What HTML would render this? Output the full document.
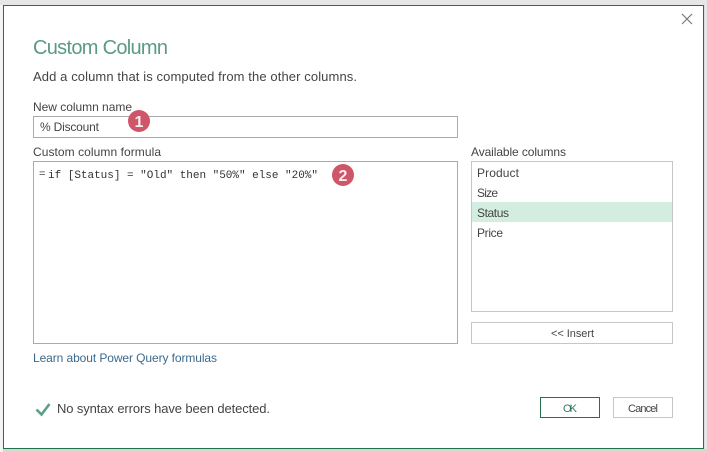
<!DOCTYPE html>
<html><head><meta charset="utf-8"><style>
html,body{margin:0;padding:0;width:707px;height:452px;overflow:hidden;background:#fff}
svg{display:block}
text{font-family:"Liberation Sans",sans-serif;font-size:12px;fill:#444}
</style></head><body>
<svg width="707" height="452" viewBox="0 0 707 452" xmlns="http://www.w3.org/2000/svg">
<rect width="707" height="452" fill="#ffffff"/>
<rect width="707" height="5" fill="#e6e6e6"/>
<rect x="704" y="5" width="3" height="447" fill="#dcdcdc"/>
<rect x="705" y="5" width="2" height="447" fill="#e8e8e8"/>
<rect x="0" y="449" width="707" height="3" fill="#d6d6d6"/>
<rect x="0" y="5" width="3" height="447" fill="#f4f4f4"/>
<rect x="3.5" y="5.5" width="700" height="443" fill="#fff" stroke="#217346"/>
<path d="M682 14L692 24M692 14L682 24" stroke="#777" stroke-width="1.2" fill="none"/>
<text x="33" y="54" style="font-size:20px;fill:#5a9a86" textLength="135">Custom Column</text>
<text x="33" y="81" style="font-size:13px" textLength="324">Add a column that is computed from the other columns.</text>
<text x="33" y="111" textLength="99">New column name</text>
<rect x="33.5" y="116.5" width="424" height="21" fill="#fff" stroke="#ababab"/>
<text x="40" y="131" textLength="59">% Discount</text>
<circle cx="139" cy="121" r="11" fill="#cf5668"/>
<text x="139" y="127" text-anchor="middle" style="font-size:16px;font-weight:bold;fill:#fbeef0">1</text>
<text x="33" y="156" textLength="128">Custom column formula</text>
<rect x="33.5" y="161.5" width="424" height="182" fill="#fff" stroke="#ababab"/>
<text x="39" y="177" style="font-size:11px">=</text>
<text x="48" y="178" style="font-family:'Liberation Mono',monospace;font-size:11px;fill:#333" textLength="270">if [Status] = "Old" then "50%" else "20%"</text>
<circle cx="343" cy="175" r="11" fill="#cf5668"/>
<text x="343" y="181" text-anchor="middle" style="font-size:16px;font-weight:bold;fill:#fbeef0">2</text>
<text x="471" y="156" textLength="95">Available columns</text>
<rect x="471.5" y="161.5" width="201" height="150" fill="#fff" stroke="#c6c6c6"/>
<rect x="472" y="202" width="200" height="20" fill="#d3eee0"/>
<text x="477" y="177" textLength="42">Product</text>
<text x="477" y="197" textLength="21">Size</text>
<text x="477" y="217" textLength="32">Status</text>
<text x="477" y="237" textLength="26">Price</text>
<rect x="471.5" y="322.5" width="201" height="21" fill="#fff" stroke="#c6c6c6"/>
<text x="551" y="337" style="font-size:11px" textLength="43">&lt;&lt; Insert</text>
<text x="33" y="362" style="fill:#3a6a8e" textLength="184">Learn about Power Query formulas</text>
<path d="M36.5 409.5L41.5 414.5L49.5 404" stroke="#5f9e86" stroke-width="2.6" fill="none"/>
<text x="57" y="413" style="font-size:13px" textLength="213">No syntax errors have been detected.</text>
<rect x="540.5" y="397.5" width="59" height="20" fill="#fff" stroke="#217346"/>
<text x="563" y="412" style="font-size:11px;fill:#2f7a62" textLength="14">OK</text>
<rect x="613.5" y="397.5" width="59" height="20" fill="#fff" stroke="#c6c6c6"/>
<text x="628" y="412" style="font-size:11px" textLength="30">Cancel</text>
</svg>
</body></html>
